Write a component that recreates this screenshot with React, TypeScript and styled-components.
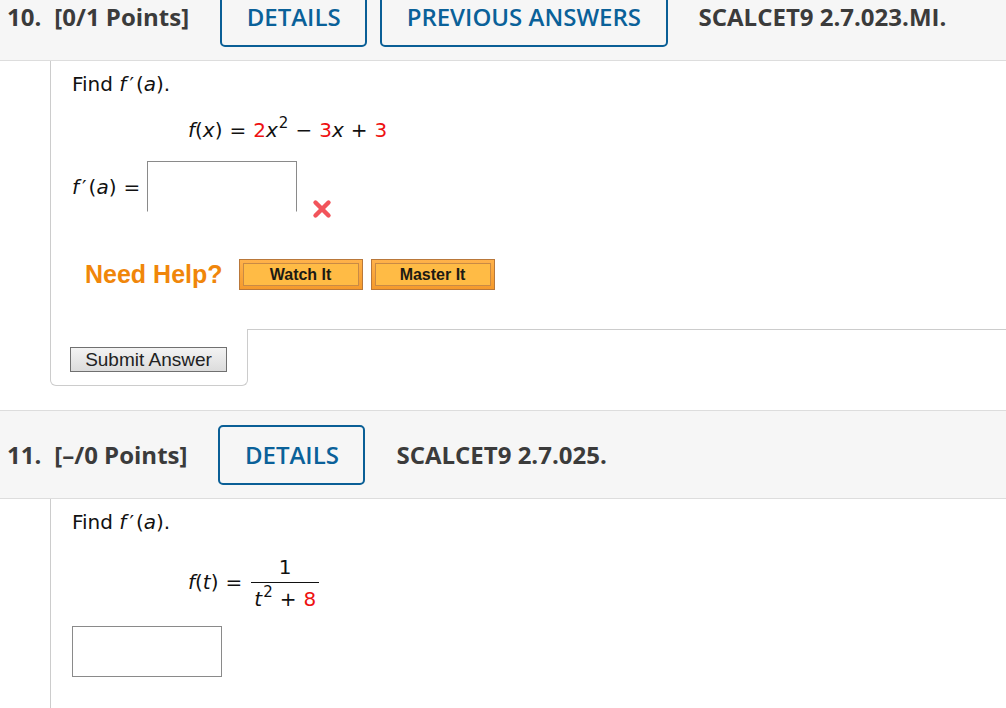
import React from "react";
import styled, { createGlobalStyle } from "styled-components";

const Global = createGlobalStyle`
  html, body { margin: 0; padding: 0; background: #fff; overflow: hidden; }
  body { width: 1006px; height: 708px; }
`;

const Page = styled.div`
  width: 1006px;
  display: flex;
  flex-direction: column;
`;

const Header = styled.div<{ $first?: boolean }>`
  box-sizing: border-box;
  height: 89px;
  margin-top: ${(p) => (p.$first ? "-28px" : "24px")};
  display: flex;
  align-items: center;
  gap: 13px;
  padding-left: 7px;
  background: #f6f6f6;
  border-top: 1px solid #dddddd;
  border-bottom: 1px solid #dddddd;
  font-family: "Open Sans", "Noto Sans", sans-serif;
  font-size: 24px;
  font-weight: 700;
  color: #3b3b3b;
`;

const HeadText = styled.span`
  white-space: nowrap;
`;

const Buttons = styled.div`
  display: flex;
  gap: 13px;
  margin: 0 18px;
`;

const OutlineButton = styled.button`
  box-sizing: border-box;
  height: 60px;
  padding: 0 24.5px;
  background: transparent;
  border: 2px solid #0a5f96;
  border-radius: 5px;
  font-family: "Open Sans", "Noto Sans", sans-serif;
  font-size: 24px;
  font-weight: 600;
  color: #0a6199;
`;

const Body = styled.div`
  display: flex;
  flex-direction: column;
  margin-left: 50px;
`;

const Content = styled.div<{ $bottom?: number }>`
  border-left: 1px solid #cccccc;
  padding: 10px 0 ${(p) => p.$bottom ?? 0}px 21px;
  display: flex;
  flex-direction: column;
  font-family: "DejaVu Sans", Verdana, sans-serif;
  font-size: 20px;
  color: #111;
`;

const Line = styled.div<{ $mt?: number; $indent?: number }>`
  display: flex;
  align-items: center;
  margin-top: ${(p) => p.$mt ?? 0}px;
  padding-left: ${(p) => p.$indent ?? 0}px;
  line-height: 26px;
  white-space: pre;
`;

const Math = styled.span`
  display: inline-block;
  white-space: pre;
`;

const I = styled.i`
  font-style: italic;
`;

const Prime = styled.span`
  margin: 0 2px 0 3px;
`;

const Red = styled.span`
  color: #ee1111;
`;

const Sup = styled.sup`
  font-size: 15px;
  line-height: 0;
  vertical-align: 9px;
  margin-left: 1px;
`;

const Op = styled.span`
  padding: 0 7px;
`;

const Fraction = styled.span`
  display: inline-flex;
  flex-direction: column;
  align-items: center;
  vertical-align: middle;
  margin-left: 2px;
`;

const Num = styled.span`
  padding: 0 4px 3px;
  line-height: 24px;
`;

const Den = styled.span`
  border-top: 1px solid #111;
  padding: 3px 3px 0;
  line-height: 26px;
`;

const AnswerBox = styled.div<{ $open?: boolean }>`
  box-sizing: border-box;
  width: 150px;
  height: 51px;
  border: 1px solid #8a8a8a;
  border-bottom-color: ${(p) => (p.$open ? "transparent" : "#8a8a8a")};
  background: #fff;
`;

const Mark = styled.svg`
  align-self: flex-end;
  margin: 0 0 -7px 15px;
`;

const HelpRow = styled.div`
  display: flex;
  align-items: center;
  margin-top: 47px;
  padding-left: 13px;
  gap: 8px;
`;

const HelpLabel = styled.span`
  font-family: "Liberation Sans", Arial, sans-serif;
  font-size: 25px;
  font-weight: 700;
  color: #f0860a;
  margin-right: 8px;
`;

const HelpButton = styled.button`
  box-sizing: border-box;
  width: 124px;
  height: 31px;
  padding: 3px;
  border: 1px solid #b9783a;
  background: linear-gradient(#ffb24a, #f59a2c);
  display: flex;
`;

const HelpInner = styled.span`
  flex: 1;
  display: flex;
  align-items: center;
  justify-content: center;
  border: 1px solid #c98a45;
  background: #ffbb45;
  font-family: "Liberation Sans", Arial, sans-serif;
  font-size: 16px;
  font-weight: 700;
  color: #1c1a14;
`;

const SubmitRow = styled.div`
  display: flex;
`;

const SubmitTab = styled.div`
  box-sizing: border-box;
  width: 198px;
  height: 57px;
  border: 1px solid #cccccc;
  border-top: none;
  border-radius: 0 0 6px 6px;
  padding: 18px 0 0 19px;
`;

const Filler = styled.div`
  flex: 1;
  border-top: 1px solid #cccccc;
`;

const SubmitButton = styled.button`
  box-sizing: border-box;
  width: 157px;
  height: 25px;
  padding: 0;
  border: 1px solid #707070;
  background: linear-gradient(#f3f3f3, #dcdcdc);
  font-family: "Liberation Sans", Arial, sans-serif;
  font-size: 19px;
  color: #222;
  line-height: 22px;
`;

const SecondContent = styled(Content)`
  margin-left: 50px;
  height: 240px;
`;

const XMark = () => (
  <Mark width="20" height="20" viewBox="0 0 20 20">
    <g stroke="#f2545b" strokeWidth="4.4" strokeLinecap="round">
      <line x1="3.5" y1="3.5" x2="16.5" y2="16.5" />
      <line x1="16.5" y1="3.5" x2="3.5" y2="16.5" />
    </g>
  </Mark>
);

const FPrimeA = () => (
  <>
    <I>f</I>
    <Prime>′</Prime>(<I>a</I>)
  </>
);

const FindLine = () => (
  <Line>
    <Math>
      Find <FPrimeA />.
    </Math>
  </Line>
);

export default function App() {
  return (
    <>
      <Global />
      <Page>
        <Header $first>
          <HeadText>10.</HeadText>
          <HeadText>[0/1 Points]</HeadText>
          <Buttons>
            <OutlineButton>DETAILS</OutlineButton>
            <OutlineButton>PREVIOUS ANSWERS</OutlineButton>
          </Buttons>
          <HeadText>SCALCET9 2.7.023.MI.</HeadText>
        </Header>
        <Body>
          <Content $bottom={39}>
            <FindLine />
            <Line $mt={20} $indent={116}>
              <Math>
                <I>f</I>(<I>x</I>)<Op>=</Op>
                <Red>2</Red>
                <I>x</I>
                <Sup>2</Sup>
                <Op>−</Op>
                <Red>3</Red>
                <I>x</I>
                <Op>+</Op>
                <Red>3</Red>
              </Math>
            </Line>
            <Line $mt={18}>
              <Math>
                <FPrimeA />
                <Op>=</Op>
              </Math>
              <AnswerBox $open />
              <XMark />
            </Line>
            <HelpRow>
              <HelpLabel>Need Help?</HelpLabel>
              <HelpButton>
                <HelpInner>Watch It</HelpInner>
              </HelpButton>
              <HelpButton>
                <HelpInner>Master It</HelpInner>
              </HelpButton>
            </HelpRow>
          </Content>
          <SubmitRow>
            <SubmitTab>
              <SubmitButton>Submit Answer</SubmitButton>
            </SubmitTab>
            <Filler />
          </SubmitRow>
        </Body>
        <Header>
          <HeadText>11.</HeadText>
          <HeadText>[–/0 Points]</HeadText>
          <Buttons>
            <OutlineButton>DETAILS</OutlineButton>
          </Buttons>
          <HeadText>SCALCET9 2.7.025.</HeadText>
        </Header>
        <SecondContent>
          <FindLine />
          <Line $mt={20} $indent={116}>
            <Math>
              <I>f</I>(<I>t</I>)<Op>=</Op>
              <Fraction>
                <Num>1</Num>
                <Den>
                  <I>t</I>
                  <Sup>2</Sup>
                  <Op>+</Op>
                  <Red>8</Red>
                </Den>
              </Fraction>
            </Math>
          </Line>
          <Line $mt={14}>
            <AnswerBox />
          </Line>
        </SecondContent>
      </Page>
    </>
  );
}
